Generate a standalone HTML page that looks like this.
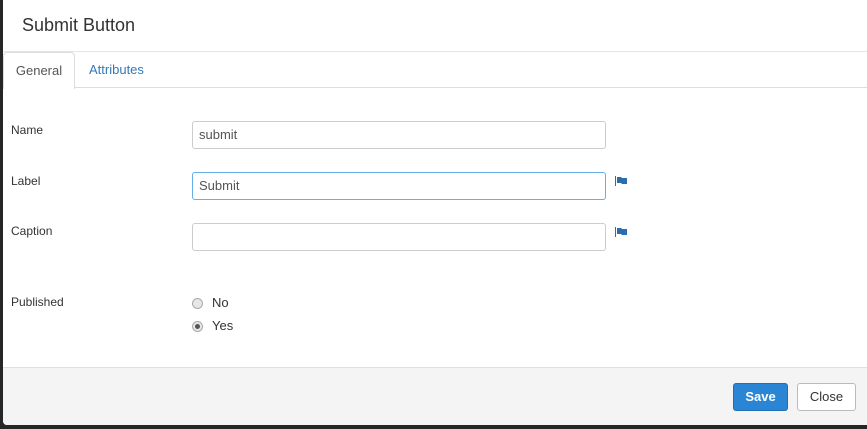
<!DOCTYPE html>
<html><head><style>
body{margin:0;width:867px;height:429px;background:#262626;overflow:hidden;font-family:"Liberation Sans",sans-serif;position:relative}
.m{position:absolute;left:3px;top:0;width:864px;height:425px;background:#fff;border-radius:0 0 0 4px;overflow:hidden}
.t{position:absolute;left:19px;top:15px;font-size:18px;color:#333}
.hl{position:absolute;left:0;right:0;top:51px;border-top:1px solid #e5e5e5}
.tabl{position:absolute;left:0;right:0;top:87px;border-top:1px solid #ddd}
.tab1{position:absolute;left:0;top:52px;width:70px;height:36px;border:1px solid #ddd;border-bottom:none;border-radius:4px 4px 0 0;background:#fff;font-size:13px;color:#555;line-height:36px;text-align:center}
.tab2{position:absolute;left:86px;top:52px;font-size:13px;color:#337ab7;line-height:36px}
.lb{position:absolute;left:8px;font-size:12px;color:#333}
.in{position:absolute;left:189px;border:1px solid #ccc;border-radius:3px;font-size:13px;color:#555;line-height:26px;padding-left:6px;box-sizing:border-box;width:414px;height:28px}
.fl{position:absolute;left:612px;width:13px;height:10px}
.r{position:absolute;left:189px;width:11px;height:11px;border-radius:50%;border:1px solid #aaa;background:#e6e6e6;box-sizing:border-box}
.rt{position:absolute;left:209px;font-size:13px;color:#333}
.ft{position:absolute;left:0;right:0;top:367px;bottom:0;background:#f4f4f4;border-top:1px solid #e0e0e0}
.b{position:absolute;top:383px;height:28px;border-radius:3px;font-size:13px;line-height:26px;text-align:center;box-sizing:border-box}
</style></head><body><div class="m">
<div class="t">Submit Button</div><div class="hl"></div>
<div class="tabl"></div><div class="tab1">General</div><div class="tab2">Attributes</div>
<div class="lb" style="top:123px">Name</div>
<div class="in" style="top:121px">submit</div>
<div class="lb" style="top:174px">Label</div>
<div class="in" style="top:172px;border-color:#66afe9">Submit</div>
<svg class="fl" style="top:176px" viewBox="0 0 13 10"><rect x="0" y="0" width="1" height="10" fill="#2a6db0"/><path d="M2 1h4l1 1h5v6h-5l-1-1h-4z" fill="#2a6db0"/></svg>
<div class="lb" style="top:224px">Caption</div>
<div class="in" style="top:223px"></div>
<svg class="fl" style="top:227px" viewBox="0 0 13 10"><rect x="0" y="0" width="1" height="10" fill="#2a6db0"/><path d="M2 1h4l1 1h5v6h-5l-1-1h-4z" fill="#2a6db0"/></svg>
<div class="lb" style="top:295px">Published</div>
<div class="r" style="top:298px"></div><div class="rt" style="top:295px">No</div>
<div class="r" style="top:321px"><div style="width:5px;height:5px;border-radius:50%;background:#555;margin:2px"></div></div><div class="rt" style="top:318px">Yes</div>
<div class="ft"></div>
<div class="b" style="left:730px;width:55px;background:#2a86d4;border:1px solid #1f6fb5;color:#fff;font-weight:bold">Save</div>
<div class="b" style="left:794px;width:59px;background:#fff;border:1px solid #bbb;color:#333">Close</div>
</div></body></html>
